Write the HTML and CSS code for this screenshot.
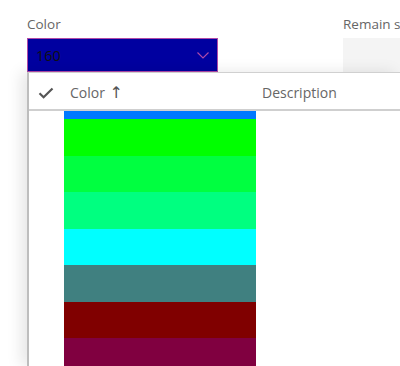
FILE: index.html
```html
<!DOCTYPE html>
<html>
<head>
<meta charset="utf-8">
<link rel="stylesheet" href="styles.css">
</head>
<body>
<div class="form">
  <div class="field field-color">
    <label class="label">Color</label>
    <div class="combo">
      <span class="combo-value">160</span>
      <svg class="chev" width="12" height="7" viewBox="0 0 12 7"><path d="M0.5 0.5 L6 6 L11.5 0.5" fill="none" stroke="#b04aa8" stroke-width="1.1"/></svg>
    </div>
  </div>
  <div class="field field-remain">
    <label class="label">Remain s</label>
    <div class="remain-box"></div>
  </div>
</div>
<div class="panel">
  <div class="panel-head">
    <svg class="check" width="16" height="12" viewBox="0 0 16 12"><path d="M1.5 6.2 L5.6 10.2 L14.5 1.5" fill="none" stroke="#555" stroke-width="2.2"/></svg>
    <span class="col-color">Color <span class="arrow">↑</span></span>
    <span class="col-desc">Description</span>
  </div>
  <div class="rows">
    <div class="bar bar-top"></div>
    <div class="bar" style="background:#00ff00"></div>
    <div class="bar" style="background:#00ff40"></div>
    <div class="bar" style="background:#00ff80"></div>
    <div class="bar" style="background:#00ffff"></div>
    <div class="bar" style="background:#408080"></div>
    <div class="bar" style="background:#800000"></div>
    <div class="bar" style="background:#800040"></div>
  </div>
</div>
</body>
</html>
```
FILE: styles.css
```css
html, body {
  margin: 0;
  padding: 0;
  background: #fff;
  width: 400px;
  height: 366px;
  overflow: hidden;
  font-family: "Open Sans", "Noto Sans", sans-serif;
}
.form {
  display: flex;
  padding: 15px 0 0 27px;
  gap: 125px;
}
.field {
  display: flex;
  flex-direction: column;
}
.label {
  font-size: 13.5px;
  line-height: 18px;
  color: #666;
  height: 23px;
  white-space: nowrap;
}
.combo {
  box-sizing: border-box;
  width: 191px;
  height: 34px;
  background: #0000a0;
  border: 1px solid #b04aa8;
  display: flex;
  align-items: center;
  justify-content: space-between;
  padding: 0 8px 0 8px;
}
.combo-value {
  font-size: 14.5px;
  color: #111;
}
.chev {
  display: block;
  margin-top: 1px;
}
.remain-box {
  width: 57px;
  height: 34px;
  background: #f4f4f4;
}
.panel {
  position: absolute;
  left: 27px;
  right: 0;
  top: 72px;
  bottom: 0;
  background: #fff;
  border-top: 1px solid #d0d0d0;
  border-left: 2px solid #bdbdbd;
  box-shadow: -6px 0 14px rgba(0,0,0,0.10);
}
.panel-head {
  box-sizing: border-box;
  height: 38px;
  padding-top: 3px;
  border-bottom: 2px solid #cfcfcf;
  display: flex;
  align-items: center;
  font-size: 14px;
  color: #666;
}
.check {
  margin-left: 9px;
  margin-right: 16px;
}
.col-color {
  width: 192px;
}
.arrow {
  font-family: "DejaVu Sans", sans-serif;
  font-size: 16px;
  color: #555;
  margin-left: 1px;
}
.rows {
  display: flex;
  flex-direction: column;
  padding-left: 35px;
}
.bar {
  width: 192px;
  height: 36.5px;
}
.bar-top {
  height: 8px;
  background: #0078ff;
}
```
